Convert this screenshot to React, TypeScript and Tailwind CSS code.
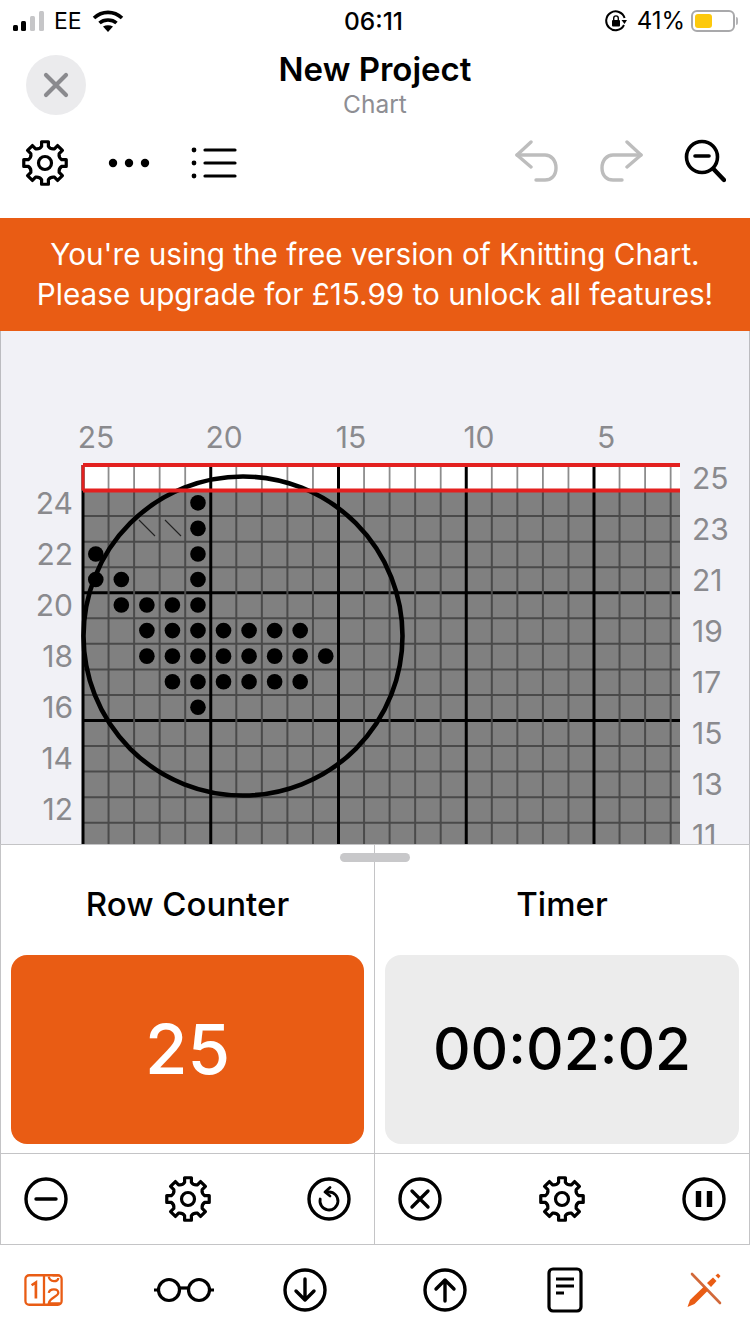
import { Fragment } from "react";

const ORANGE = "#e95c14";

function gearPath(cx: number, cy: number, rOut: number, rIn: number) {
  let d = "";
  for (let i = 0; i < 8; i++) {
    const a = (i * Math.PI) / 4 - Math.PI / 2;
    const p = (r: number, da: number) =>
      `${(cx + r * Math.cos(a + da)).toFixed(2)} ${(cy + r * Math.sin(a + da)).toFixed(2)}`;
    d += `${i === 0 ? "M" : "L"}${p(rIn, -0.2)} L${p(rOut, -0.16)} L${p(rOut, 0.16)} L${p(rIn, 0.2)} Q${p(rIn * 0.86, Math.PI / 8)} `;
    const next = a + Math.PI / 4;
    d += `${(cx + rIn * Math.cos(next - 0.2)).toFixed(2)} ${(cy + rIn * Math.sin(next - 0.2)).toFixed(2)} `;
  }
  return d + "Z";
}

function Gear() {
  return (
    <svg width="48" height="48" viewBox="0 0 48 48" fill="none" stroke="#000" strokeWidth="3.2" strokeLinejoin="round">
      <path d={gearPath(24, 24, 21.5, 17)} />
      <circle cx="24" cy="24" r="6.5" />
    </svg>
  );
}

function CircleIcon({ children }: { children: React.ReactNode }) {
  return (
    <svg width="44" height="44" viewBox="0 0 44 44" fill="none" stroke="#000" strokeWidth="3.4" strokeLinecap="round" strokeLinejoin="round">
      <circle cx="22" cy="22" r="20" />
      {children}
    </svg>
  );
}

function StatusBar() {
  return (
    <div className="relative flex h-[42px] items-center justify-between pl-[13px] pr-[12px] text-[24px] text-black">
      <div className="flex items-center">
        <svg width="34" height="20" viewBox="0 0 34 20" fill="#000">
          <rect x="0" y="14" width="5" height="6" rx="1.5" />
          <rect x="8" y="10" width="5" height="10" rx="1.5" />
          <rect x="17" y="5" width="5" height="15" rx="1.5" fill="#c6c6c8" />
          <rect x="26" y="0" width="5" height="20" rx="1.5" fill="#c6c6c8" />
        </svg>
        <span className="ml-[7px] text-[23px] leading-none">EE</span>
        <svg className="ml-[10px]" width="32" height="22" viewBox="0 0 32 22" fill="none" stroke="#000" strokeWidth="3.6">
          <path d="M2 8 C10 0.5 22 0.5 30 8" />
          <path d="M7.5 13 C12 9 20 9 24.5 13" />
          <path d="M16 22 L11 16.6 C14 14.8 18 14.8 21 16.6 Z" fill="#000" stroke="none" />
        </svg>
      </div>
      <span className="absolute left-[344px] top-[5px] text-[24.5px] font-medium leading-[32px]">06:11</span>
      <div className="flex items-center">
        <svg width="22" height="22" viewBox="0 0 22 22" fill="none" stroke="#000" strokeWidth="2">
          <path d="M19 15 A9.4 9.4 0 1 1 19.6 8" />
          <path d="M22 10 L16.5 10 L19.5 14 Z" fill="#000" stroke="none" />
          <rect x="7" y="10" width="8" height="6.5" rx="1" fill="#000" stroke="none" />
          <path d="M8.7 10 V8.2 A2.3 2.3 0 0 1 13.3 8.2 V10" strokeWidth="1.4" />
        </svg>
        <span className="ml-[10px] text-[24px] leading-none">41%</span>
        <div className="ml-[6px] flex h-[22px] w-[44px] items-center rounded-[6px] border-2 border-[#a9a9ab] p-[2px]">
          <div className="h-full w-[17px] rounded-[3px] bg-[#fdc90c]" />
        </div>
        <div className="ml-[1px] h-[8px] w-[2px] rounded-r bg-[#b5b5b7]" />
      </div>
    </div>
  );
}

function Header() {
  return (
    <div className="relative flex h-[72px] items-start justify-center">
      <button className="absolute left-[26px] top-[13px] flex h-[60px] w-[60px] items-center justify-center rounded-full bg-[#ebebed]">
        <svg width="26" height="26" viewBox="0 0 26 26" stroke="#8a8a8e" strokeWidth="4.2" strokeLinecap="round">
          <path d="M3 3 L23 23 M23 3 L3 23" />
        </svg>
      </button>
      <div className="flex flex-col items-center pt-[8px]">
        <span className="text-[33px] font-semibold leading-[39px] text-black">New Project</span>
        <span className="text-[24.5px] leading-[31px] text-[#8e8e93]">Chart</span>
      </div>
    </div>
  );
}

function Toolbar() {
  return (
    <div className="flex h-[104px] items-start justify-between pl-[21px] pr-[24px] pt-[25px]">
      <div className="flex items-center">
        <Gear />
        <svg className="ml-[39px]" width="44" height="12" viewBox="0 0 44 12" fill="#000">
          <circle cx="5" cy="6" r="4.2" />
          <circle cx="21" cy="6" r="4.2" />
          <circle cx="37" cy="6" r="4.2" />
        </svg>
        <svg className="ml-[39px]" width="46" height="36" viewBox="0 0 46 36" fill="#000" stroke="#000" strokeWidth="3.2" strokeLinecap="round">
          <circle cx="3" cy="5" r="2.4" stroke="none" />
          <circle cx="3" cy="18" r="2.4" stroke="none" />
          <circle cx="3" cy="31" r="2.4" stroke="none" />
          <path d="M14 5 H44 M14 18 H44 M14 31 H44" />
        </svg>
      </div>
      <div className="flex items-center">
        <svg width="44" height="44" viewBox="0 0 44 44" fill="none" stroke="#bdbdbd" strokeWidth="3.4" strokeLinecap="round" strokeLinejoin="round">
          <path d="M16 3 L2 16 L16 28" />
          <path d="M2 16 H30 C36 16 41 21 41 29 C41 37 36 41 30 41 H21" />
        </svg>
        <svg className="ml-[40px]" width="44" height="44" viewBox="0 0 44 44" fill="none" stroke="#bdbdbd" strokeWidth="3.4" strokeLinecap="round" strokeLinejoin="round">
          <path d="M28 3 L42 16 L28 28" />
          <path d="M42 16 H14 C8 16 3 21 3 29 C3 37 8 41 14 41 H23" />
        </svg>
        <svg className="ml-[41px]" width="42" height="44" viewBox="0 0 42 44" fill="none" stroke="#000" strokeWidth="3.6" strokeLinecap="round">
          <circle cx="18" cy="18" r="15.5" />
          <path d="M11 17 H25" />
          <path d="M29.5 30 L40 41" strokeWidth="4.4" />
        </svg>
      </div>
    </div>
  );
}

function Banner() {
  return (
    <div className="flex h-[113px] flex-col items-center justify-center bg-[#e95c14] pb-[1px] text-[29.7px] leading-[40px] text-white">
      <span>You&apos;re using the free version of Knitting Chart.</span>
      <span>Please upgrade for £15.99 to unlock all features!</span>
    </div>
  );
}

const CELL = 25.55;
const GRID_X = 83;
const GRID_Y = 465;
const GRID_R = 680;
const GRID_B = 844;

const dots: [number, number[]][] = [
  [1, [4]],
  [2, [4]],
  [3, [0, 4]],
  [4, [0, 1, 4]],
  [5, [1, 2, 3, 4]],
  [6, [2, 3, 4, 5, 6, 7, 8]],
  [7, [2, 3, 4, 5, 6, 7, 8, 9]],
  [8, [3, 4, 5, 6, 7, 8]],
  [9, [4]],
];

const numberClass = "fill-[#8a8a8e] text-[30px]";

function Chart() {
  const cols = Array.from({ length: 24 }, (_, i) => i);
  const rows = Array.from({ length: 15 }, (_, i) => i);
  return (
    <div className="h-[513px] border-x border-[#bcbcc0] bg-[#f1f1f6]">
      <svg className="block" width="748" height="513" viewBox="1 331 748 513">
        <rect x={GRID_X} y={GRID_Y} width={GRID_R - GRID_X} height={GRID_B - GRID_Y} fill="#808080" />
        <rect x={GRID_X} y={GRID_Y} width={GRID_R - GRID_X} height={CELL} fill="#fff" />
        {rows.map((r) => {
          const y = GRID_Y + r * CELL;
          const thick = r === 5 || r === 10;
          return r > 0 ? (
            <line key={r} x1={GRID_X} x2={GRID_R} y1={y} y2={y} stroke={thick ? "#000" : "#4a4a4a"} strokeWidth={thick ? 3 : 2} />
          ) : null;
        })}
        {cols.map((c) => {
          const x = GRID_X + c * CELL;
          const thick = c % 5 === 0;
          return (
            <Fragment key={c}>
              <line x1={x} x2={x} y1={GRID_Y + CELL} y2={GRID_B} stroke={thick ? "#000" : "#4a4a4a"} strokeWidth={thick ? 3 : 2} />
              <line x1={x} x2={x} y1={GRID_Y} y2={GRID_Y + CELL} stroke={thick ? "#000" : "#8d8d8d"} strokeWidth={thick ? 3 : 1.8} />
            </Fragment>
          );
        })}
        <path d="M139 520 L155 536 M165 520 L181 536" stroke="#222" strokeWidth="1.1" />
        {dots.map(([r, list]) =>
          list.map((c) => (
            <circle key={`${r}-${c}`} cx={GRID_X + (c + 0.5) * CELL} cy={GRID_Y + (r + 0.5) * CELL - 0.5} r="7.8" fill="#000" />
          )),
        )}
        <circle cx="243" cy="636" r="159.5" fill="none" stroke="#000" strokeWidth="4.6" />
        <path d={`M${GRID_X} ${GRID_Y} H${GRID_R} M${GRID_X} ${GRID_Y + CELL} H${GRID_R}`} stroke="#e3201f" strokeWidth="4" />
        <line x1={GRID_X} x2={GRID_X} y1={GRID_Y} y2={GRID_Y + CELL} stroke="#e3201f" strokeWidth="3" />
        {[
          ["25", 96],
          ["20", 224],
          ["15", 351],
          ["10", 479],
          ["5", 606],
        ].map(([t, x]) => (
          <text key={t} x={x} y="448" textAnchor="middle" className={numberClass}>
            {t}
          </text>
        ))}
        {[24, 22, 20, 18, 16, 14, 12].map((n, i) => (
          <text key={n} x="73" y={514 + i * 51} textAnchor="end" className={numberClass}>
            {n}
          </text>
        ))}
        {[25, 23, 21, 19, 17, 15, 13, 11].map((n, i) => (
          <text key={n} x="692" y={489 + i * 51} className={numberClass}>
            {n}
          </text>
        ))}
      </svg>
    </div>
  );
}

function Panels() {
  return (
    <div className="relative grid h-[400px] grid-cols-[375px_375px] border-t border-[#c4c4c6]">
      <div className="absolute left-[340px] top-[8px] h-[9px] w-[70px] rounded-full bg-[#c8c8ca]" />
      <div className="flex flex-col border-l border-r border-[#c4c4c6]">
        <h2 className="flex h-[110px] items-end justify-center pb-[31px] text-[33px] font-medium leading-[40px] text-black">Row Counter</h2>
        <div className="mx-[10px] flex h-[189px] items-center justify-center rounded-[16px] bg-[#e95c14] text-[69px] font-medium leading-none text-white">25</div>
        <div className="mt-[9px] flex h-[90px] items-center justify-between border-t border-[#c4c4c6] pl-[23px] pr-[23px]">
          <CircleIcon>
            <path d="M12 22 H32" />
          </CircleIcon>
          <Gear />
          <CircleIcon>
            <path d="M19 15 H22 A9 9 0 1 1 13.2 22" strokeWidth="2.8" />
            <path d="M23 10.5 L18 15 L23 19" strokeWidth="2.8" />
          </CircleIcon>
        </div>
      </div>
      <div className="flex flex-col border-r border-[#c4c4c6]">
        <h2 className="flex h-[110px] items-end justify-center pb-[31px] text-[33px] font-medium leading-[40px] text-black">Timer</h2>
        <div className="ml-[10px] mr-[10px] flex h-[189px] items-center justify-center rounded-[16px] bg-[#ececec] text-[58.4px] font-medium leading-none text-black">00:02:02</div>
        <div className="mt-[9px] flex h-[90px] items-center justify-between border-t border-[#c4c4c6] pl-[23px] pr-[23px]">
          <CircleIcon>
            <path d="M14 14 L30 30 M30 14 L14 30" />
          </CircleIcon>
          <Gear />
          <CircleIcon>
            <path d="M16.5 14 V30 M27.5 14 V30" strokeWidth="5.4" strokeLinecap="butt" />
          </CircleIcon>
        </div>
      </div>
    </div>
  );
}

function TabBar() {
  return (
    <div className="flex h-[89px] items-center border-t border-[#c4c4c6] pt-[1px]">
      <div className="ml-[24px] flex w-[40px] justify-center">
        <svg width="42" height="34" viewBox="0 0 42 34" fill="none" stroke={ORANGE} strokeWidth="2.4">
          <rect x="1.5" y="1.5" width="38" height="31" rx="4" />
          <path d="M21 1.5 V32.5" />
          <path d="M8 12 L12.5 9 V26" strokeWidth="2.8" />
          <path d="M26 3 C27 9 36 9 36 4.5 M30 1.5 H36" />
          <path d="M26 20 C27 15 36 15 36 20 C36 24 27 25 26 31 H38" />
        </svg>
      </div>
      <div className="ml-[90px] flex w-[60px] justify-center">
        <svg width="60" height="26" viewBox="0 0 60 26" fill="none" stroke="#000" strokeWidth="3.2">
          <circle cx="15" cy="13" r="10.5" />
          <circle cx="45" cy="13" r="10.5" />
          <path d="M25.5 11 H34.5" />
          <path d="M0 13 H4.5 M55.5 13 H60" />
        </svg>
      </div>
      <div className="ml-[69px] flex w-[44px] justify-center">
        <CircleIcon>
          <path d="M22 11 V32 M13 23 L22 32 L31 23" />
        </CircleIcon>
      </div>
      <div className="ml-[96px] flex w-[44px] justify-center">
        <CircleIcon>
          <path d="M22 33 V12 M13 21 L22 12 L31 21" />
        </CircleIcon>
      </div>
      <div className="ml-[80px] flex w-[36px] justify-center">
        <svg width="36" height="46" viewBox="0 0 36 46" fill="none" stroke="#000" strokeWidth="3.2" strokeLinecap="round">
          <rect x="2" y="2" width="32" height="42" rx="4" />
          <path d="M9 12 H27 M9 19 H27 M9 26 H17" strokeLinecap="butt" />
        </svg>
      </div>
      <div className="ml-[104px] flex w-[36px] justify-center">
        <svg width="36" height="36" viewBox="0 0 36 36" fill="none" stroke="#d2693a" strokeWidth="2.6" strokeLinecap="round">
          <path d="M5 2 L33 31" />
          <path d="M0.5 35 L3 28 L17 14.5 L21 18.5 L7.5 32 Z" fill={ORANGE} stroke="none" />
          <path d="M20 11 L26 5.5 L29.5 9 L24 15 Z" fill={ORANGE} stroke="none" />
          <path d="M28.5 3.5 L31 1.5 L33.5 4 L31.5 6.5 Z" fill={ORANGE} stroke="none" />
        </svg>
      </div>
    </div>
  );
}

export default function App() {
  return (
    <div className="h-[1334px] w-[750px] overflow-hidden bg-white font-['Inter',sans-serif]">
      <StatusBar />
      <Header />
      <Toolbar />
      <Banner />
      <Chart />
      <Panels />
      <TabBar />
    </div>
  );
}
